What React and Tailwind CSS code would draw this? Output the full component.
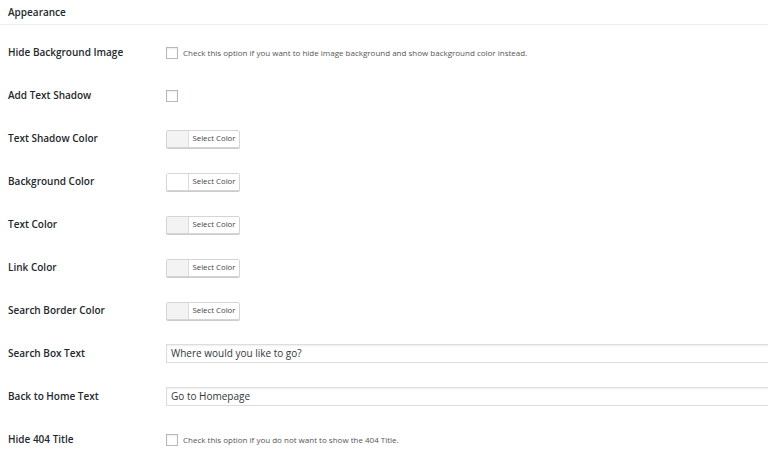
import React from "react";

const font = { fontFamily: '"Open Sans", "Noto Sans", sans-serif' };

function Checkbox() {
  return (
    <span className="inline-block w-[12px] h-[12px] border border-[#b4b9be] bg-white shadow-[inset_0_1px_2px_rgba(0,0,0,0.08)] shrink-0" />
  );
}

function ColorButton({ swatch }) {
  return (
    <div className="flex h-[18px] w-[74px] border border-[#d5d5d5] rounded-[2px] bg-[#f7f7f7] shadow-[0_1px_0_#ccc]">
      <span className={`w-[22px] h-full border-r border-[#dcdcdc] ${swatch}`} />
      <span className="flex-1 flex items-center justify-center text-[7.8px] text-[#444] bg-white">
        Select Color
      </span>
    </div>
  );
}

function TextInput({ value }) {
  return (
    <div className="flex-1 h-[19px] border border-[#ddd] bg-white shadow-[inset_0_1px_2px_rgba(0,0,0,0.07)] flex items-center px-[4px] text-[10px] text-[#32373c]">
      {value}
    </div>
  );
}

const rows = [
  { label: "Hide Background Image", type: "check", desc: "Check this option if you want to hide image background and show background color instead." },
  { label: "Add Text Shadow", type: "check" },
  { label: "Text Shadow Color", type: "color", swatch: "bg-[#f3f3f3]" },
  { label: "Background Color", type: "color", swatch: "bg-white" },
  { label: "Text Color", type: "color", swatch: "bg-[#f3f3f3]" },
  { label: "Link Color", type: "color", swatch: "bg-[#f3f3f3]" },
  { label: "Search Border Color", type: "color", swatch: "bg-[#f3f3f3]" },
  { label: "Search Box Text", type: "text", value: "Where would you like to go?" },
  { label: "Back to Home Text", type: "text", value: "Go to Homepage" },
  { label: "Hide 404 Title", type: "check", desc: "Check this option if you do not want to show the 404 Title." },
];

export default function App() {
  return (
    <div className="w-[768px] h-[468px] bg-white overflow-hidden text-[#23282d]" style={font}>
      <div className="h-[25px] pt-[1px] border-b border-[#eeeeee] flex items-center px-[8px] text-[10px] font-semibold">
        Appearance
      </div>
      <div className="pt-[6px]">
        {rows.map((r) => (
          <div key={r.label} className="h-[43px] flex items-center">
            <div className="w-[166px] pl-[8px] text-[10px] font-semibold shrink-0">
              {r.label}
            </div>
            <div className="flex-1 flex items-center mr-[-4px]">
              {r.type === "check" && (
                <div className="flex items-center gap-[5px]">
                  <Checkbox />
                  {r.desc && (
                    <span className="text-[8px] text-[#555]">{r.desc}</span>
                  )}
                </div>
              )}
              {r.type === "color" && <ColorButton swatch={r.swatch} />}
              {r.type === "text" && <TextInput value={r.value} />}
            </div>
          </div>
        ))}
      </div>
    </div>
  );
}
